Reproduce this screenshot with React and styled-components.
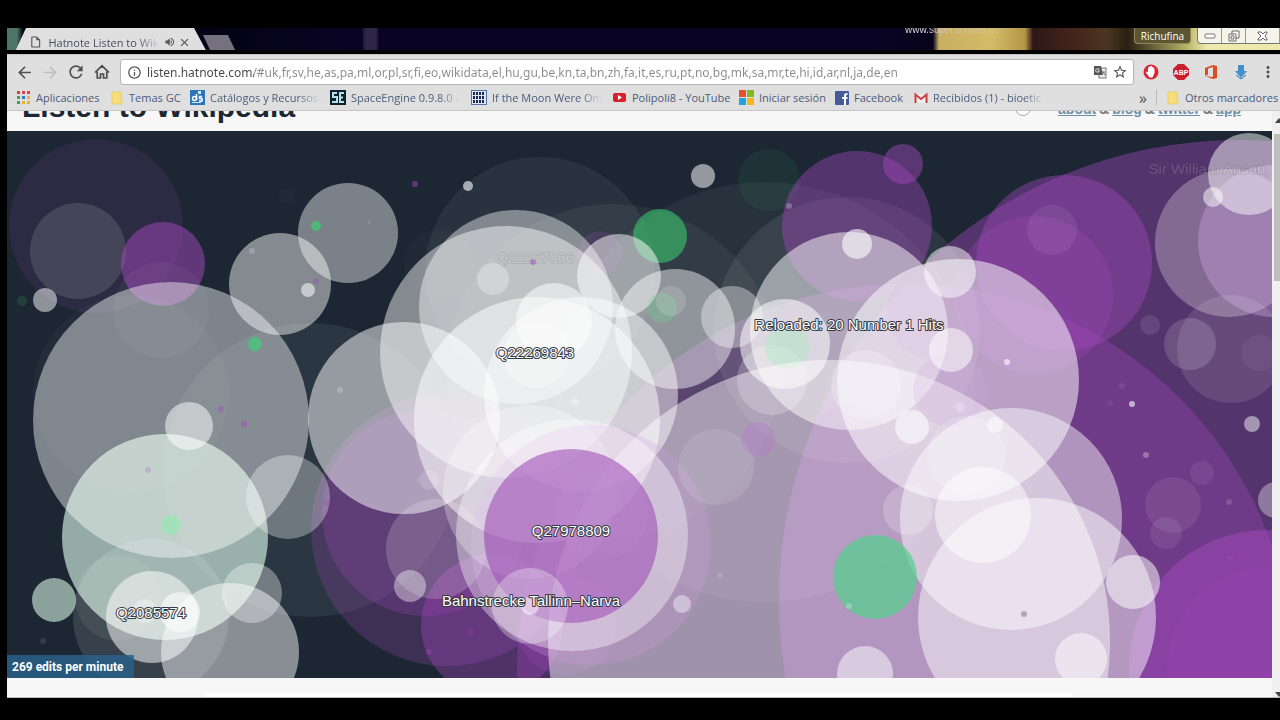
import React from "react";
import styled, { createGlobalStyle } from "styled-components";
import {
  MdArrowBack, MdArrowForward, MdRefresh, MdInfoOutline, MdStarBorder,
  MdVolumeUp, MdClose, MdMoreVert, MdOutlineInsertDriveFile,
} from "react-icons/md";

const GlobalStyle = createGlobalStyle`
  * { box-sizing: border-box; }
  body { margin: 0; background: #000; }
  button, input { font: inherit; }
`;

const ui = `"Open Sans", "Noto Sans", sans-serif`;
const sans = `"Liberation Sans", Arial, sans-serif`;

const Screen = styled.div`
  min-height: 100vh;
  display: flex;
  flex-direction: column;
  padding: 28px 0 22px 7px;
  background: #000;
  font-family: ${ui};
`;

const TabStrip = styled.div`
  height: 26px;
  display: flex;
  align-items: flex-start;
  overflow: hidden;
  border-bottom: 4px solid #000;
  background: linear-gradient(90deg, #4c7568 10px, #02020c 16px, #040216 220px, #090424 340px, #090424 355px, #2c2546 358px, #2c2546 369px, #090424 372px, #090424 860px, #07031c 926px, #c9ae63 932px, #d4bb66 985px, #b39645 1018px, #2b1716 1026px, #45231b 1065px, #4b3520 1100px, #291f12 1120px, #b9b46a 1180px, #eee9ac 1200px);
`;

const Tab = styled.div`
  display: flex;
  align-items: center;
  width: 194px;
  height: 26px;
  margin-left: 7px;
  padding: 2px 16px 0 15px;
  background: #dfdfdf;
  clip-path: polygon(12px 0, 180px 0, 194px 100%, 0 100%);
  color: #555;
  font-size: 11px;
  flex-shrink: 0;
`;

const TabTitle = styled.span`
  flex: 1;
  margin: 0 6px;
  white-space: nowrap;
  color: #4a4a5e;
  mask-image: linear-gradient(90deg, #000 88px, transparent 112px);
`;

const PlainButton = styled.button`
  display: flex;
  align-items: center;
  justify-content: center;
  width: ${(p) => p.$w || 16}px;
  height: ${(p) => p.$h || 16}px;
  padding: 0;
  border: 0;
  background: none;
  color: ${(p) => p.$color || "#505050"};
  flex-shrink: 0;
`;

const NewTab = styled.button`
  width: 32px;
  height: 15px;
  margin: 7px 0 0 -5px;
  padding: 0;
  border: 0;
  background: #75717e;
  clip-path: polygon(0 0, 25px 0, 100% 100%, 7px 100%);
`;

const Watermark = styled.span`
  margin: -5px 0 0 auto;
  width: 95px;
  color: #d8d3cf;
  font: 10px/14px ${sans};
  white-space: nowrap;
  mask-image: linear-gradient(90deg, #000 24px, rgba(0, 0, 0, 0.45) 50px);
`;

const Profile = styled.button`
  height: 16px;
  width: 57px;
  margin: 0 6px 0 134px;
  padding: 0;
  border: 1px solid #8e8860;
  border-top: 0;
  border-radius: 0 0 4px 4px;
  background: #5c552f;
  color: #fff;
  font: 10px/14px ${ui};
`;

const WindowButtons = styled.div`
  display: flex;
  height: 16px;
  border-left: 1px solid #777;
  border-bottom: 1px solid #777;
  border-radius: 0 0 0 4px;
  background: #f4f4ea;
`;

const WindowButton = styled(PlainButton)`
  height: 15px;
  border-right: 1px solid #999;
`;

const Toolbar = styled.div`
  display: flex;
  align-items: center;
  height: 33px;
  padding: 2px 0 0 4px;
  border-top: 1px solid #c4c4c4;
  background: #dfdfdf;
`;

const NavButtons = styled.div`
  display: flex;
  margin-right: 5px;
`;

const AddressBar = styled.form`
  flex: 1;
  min-width: 0;
  height: 26px;
  display: flex;
  align-items: center;
  padding: 0 5px 0 6px;
  border: 1px solid #b5b5b5;
  border-radius: 3px;
  background: #fff;
`;

const Address = styled.input`
  flex: 1;
  min-width: 0;
  height: 22px;
  margin-left: 5px;
  padding: 0;
  border: 0;
  outline: 0;
  font-family: "Noto Sans", sans-serif;
  font-size: 12px;
  background: linear-gradient(90deg, #45454c 107px, #8b8b8b 107px);
  background-clip: text;
  -webkit-background-clip: text;
  -webkit-text-fill-color: transparent;
`;

const Extensions = styled.div`
  display: flex;
  align-items: center;
  margin-left: 2px;
`;

const Bookmarks = styled.nav`
  display: flex;
  align-items: center;
  height: 24px;
  padding: 0 5px 2px 9px;
  background: #dfdfdf;
  border-bottom: 1px solid #c6c6c6;
`;

const BookmarkLink = styled.a`
  display: flex;
  align-items: center;
  gap: 5px;
  margin-right: 10px;
  flex-shrink: 0;
  color: #4b5c7c;
  font-size: 11px;
  line-height: 16px;
  text-decoration: none;
  white-space: nowrap;
  &:last-child { margin-right: 0; }
  span {
    width: ${(p) => p.$w}px;
    mask-image: ${(p) => (p.$fade ? "linear-gradient(90deg, #000 80%, transparent)" : "none")};
  }
`;

const More = styled(PlainButton)`
  margin-left: auto;
  font-size: 16px;
  line-height: 16px;
`;

const Divider = styled.span`
  width: 1px;
  height: 15px;
  margin: 0 9px 0 5px;
  background: #bbb;
`;

const Viewport = styled.div`
  flex: 1;
  display: flex;
  background: #f7f7f7;
  border-bottom: 1px solid #bcbcbc;
  font-family: ${sans};
`;

const Page = styled.main`
  flex: 1;
  min-width: 0;
  display: flex;
  flex-direction: column;
`;

const Header = styled.header`
  height: 20px;
  display: flex;
  align-items: flex-end;
  justify-content: space-between;
  padding: 0 31px 7px 15px;
  overflow: hidden;
`;

const Title = styled.h1`
  margin: 0;
  color: #1c2733;
  font-size: 30px;
  line-height: 34px;
`;

const Links = styled.div`
  display: flex;
  align-items: flex-end;
  padding-bottom: 6px;
  color: #777;
  font-size: 14px;
  font-weight: bold;
  line-height: 18px;
  gap: 3px;
  a { color: #6d8ea5; }
`;

const Radio = styled.input`
  width: 16px;
  height: 16px;
  margin: 0 24px 2px 0;
  appearance: none;
  border: 1px solid #aaa;
  border-radius: 50%;
  background: #fff;
`;

const Stage = styled.div`
  flex: 1;
  display: grid;
  background: #1c2733;
  overflow: hidden;
  > * { grid-area: 1 / 1; }
`;

const Bubbles = styled.svg`
  width: 100%;
  height: 547px;
  display: block;
`;

const BubbleLabel = styled.text`
  font: 15px ${sans};
  text-anchor: middle;
  fill: #fff;
  stroke: #343943;
  stroke-width: 2px;
  stroke-linejoin: round;
  paint-order: stroke;
  opacity: ${(p) => p.$fade || 1};
`;

const EditRate = styled.p`
  align-self: end;
  justify-self: start;
  z-index: 1;
  width: 127px;
  height: 23px;
  margin: 0;
  padding: 0 5px;
  background: rgba(41, 98, 137, 0.85);
  color: #fff;
  font-family: Roboto, ${sans};
  font-size: 12px;
  font-weight: bold;
  line-height: 25px;
  white-space: nowrap;
`;

const PageFoot = styled.footer`
  height: 19px;
  padding: 15px 200px 0 199px;
  &::after { content: ""; display: block; height: 4px; background: #fff; }
`;

const ScrollTrack = styled.div`
  width: 8px;
  display: flex;
  flex-direction: column;
  justify-content: space-between;
  padding-top: 7px;
  background: #f0f0f0;
`;

const ScrollThumb = styled.div`
  height: 147px;
  margin: 10px 0 auto 2px;
  background: #bcbfbd;
`;

const W = "#ffffff";
const P = "#a347bd";
const G = "#3fcf75";
const M = "#d5f5e3";

// centre x, centre y, radius, fill, opacity; painted from the oldest edit to the newest
const bubbles = [
  [1239, 600, 460, P, 0.42],
  [905, 672, 388, P, 0.34],
  [310, 470, 147, M, 0.08],
  [540, 272, 115, W, 0.06],
  [613, 371, 167, M, 0.06],
  [765, 392, 210, W, 0.05],
  [847, 330, 133, W, 0.08],
  [96, 226, 87, P, 0.12],
  [78, 251, 48, W, 0.12],
  [163, 264, 42, P, 0.5],
  [161, 310, 48, W, 0.04],
  [131, 393, 98, W, 0.03],
  [769, 180, 31, G, 0.07],
  [440, 265, 36, W, 0.02],
  [287, 196, 8, W, 0.02],
  [447, 530, 136, P, 0.25],
  [425, 513, 103, P, 0.25],
  [492, 625, 71, P, 0.38],
  [566, 625, 50, P, 0.2],
  [165, 537, 103, M, 0.65],
  [151, 617, 78, W, 0.12],
  [118, 598, 43, W, 0.07],
  [857, 226, 75, P, 0.42],
  [903, 164, 20, P, 0.46],
  [1034, 295, 79, P, 0.25],
  [1064, 263, 88, P, 0.42],
  [1052, 230, 25, W, 0.07],
  [1266, 667, 137, P, 0.5],
  [1268, 668, 101, P, 0.25],
  [171, 420, 138, W, 0.43],
  [280, 284, 51, W, 0.46],
  [348, 233, 50, W, 0.42],
  [252, 251, 3, W, 0.2],
  [369, 222, 2, W, 0.1],
  [316, 226, 5, G, 0.7],
  [308, 290, 7, W, 0.55],
  [316, 281, 3, P, 0.35],
  [255, 344, 7, G, 0.7],
  [45, 300, 12, W, 0.5],
  [22, 301, 5, G, 0.15],
  [189, 426, 24, W, 0.5],
  [221, 409, 3, P, 0.4],
  [244, 424, 3, P, 0.5],
  [148, 470, 3, P, 0.2],
  [171, 525, 10, "#7ff0a5", 0.5],
  [152, 617, 46, W, 0.52],
  [180, 612, 20, W, 0.55],
  [145, 611, 12, W, 0.3],
  [230, 652, 69, W, 0.48],
  [252, 593, 30, W, 0.35],
  [54, 600, 22, M, 0.6],
  [43, 641, 3, W, 0.1],
  [288, 497, 42, W, 0.32],
  [404, 418, 96, W, 0.5],
  [340, 390, 3, W, 0.2],
  [436, 549, 50, W, 0.18],
  [410, 586, 16, W, 0.4],
  [429, 480, 10, W, 0.15],
  [415, 184, 3, P, 0.5],
  [468, 186, 5, W, 0.6],
  [703, 176, 12, W, 0.53],
  [600, 253, 22, P, 0.2],
  [516, 307, 97, W, 0.42],
  [506, 352, 126, W, 0.46],
  [493, 279, 16, W, 0.3],
  [533, 262, 3, P, 0.5],
  [537, 420, 123, W, 0.5],
  [581, 394, 97, W, 0.48],
  [554, 321, 38, W, 0.52],
  [536, 355, 33, W, 0.3],
  [575, 402, 4, W, 0.3],
  [660, 236, 27, "#38c46c", 0.62],
  [619, 276, 42, W, 0.5],
  [675, 329, 60, W, 0.46],
  [662, 308, 15, "#6bdc93", 0.28],
  [671, 301, 15, W, 0.14],
  [732, 317, 31, W, 0.36],
  [772, 380, 35, W, 0.22],
  [849, 331, 99, W, 0.5],
  [857, 244, 15, W, 0.6],
  [785, 344, 45, W, 0.55],
  [787, 347, 22, "#9eefbd", 0.36],
  [789, 206, 3, W, 0.25],
  [848, 445, 40, P, 0.08],
  [829, 641, 281, W, 0.47],
  [950, 390, 37, P, 0.2],
  [935, 312, 48, P, 0.12],
  [958, 380, 121, W, 0.52],
  [866, 385, 35, W, 0.22],
  [950, 272, 26, W, 0.5],
  [951, 350, 22, W, 0.52],
  [1007, 362, 3, W, 0.6],
  [530, 492, 87, W, 0.28],
  [591, 545, 120, "#d39ae5", 0.25],
  [572, 535, 116, W, 0.38],
  [602, 513, 46, W, 0.12],
  [571, 536, 87, "#a050b8", 0.6],
  [530, 606, 38, W, 0.3],
  [530, 606, 9, W, 0.5],
  [682, 604, 9, W, 0.4],
  [716, 467, 38, W, 0.11],
  [758, 439, 17, "#b872cf", 0.3],
  [720, 575, 3, W, 0.12],
  [429, 652, 3, P, 0.4],
  [471, 632, 3, P, 0.25],
  [326, 503, 3, P, 0.25],
  [966, 455, 39, W, 0.18],
  [908, 510, 25, W, 0.2],
  [1011, 519, 111, W, 0.46],
  [983, 515, 48, W, 0.5],
  [1037, 617, 119, W, 0.48],
  [912, 427, 17, W, 0.55],
  [995, 425, 8, W, 0.5],
  [960, 407, 5, W, 0.25],
  [875, 577, 42, "#55d08c", 0.72],
  [849, 606, 3, W, 0.25],
  [1024, 614, 3, "#65566e", 0.4],
  [1133, 582, 27, W, 0.52],
  [1081, 659, 26, W, 0.5],
  [865, 674, 28, W, 0.5],
  [1229, 243, 74, W, 0.27],
  [1274, 241, 76, "#d0a5e3", 0.38],
  [1249, 174, 41, W, 0.48],
  [1213, 197, 10, W, 0.5],
  [1231, 349, 54, W, 0.11],
  [1190, 344, 26, W, 0.15],
  [1150, 325, 10, W, 0.1],
  [1259, 353, 18, W, 0.04],
  [1252, 424, 8, W, 0.48],
  [1276, 500, 18, W, 0.35],
  [1173, 505, 28, W, 0.08],
  [1166, 533, 16, W, 0.08],
  [1202, 473, 12, W, 0.07],
  [1146, 455, 3, W, 0.3],
  [1229, 502, 3, W, 0.15],
  [1132, 404, 3, W, 0.6],
  [1122, 386, 3, W, 0.08],
  [1110, 403, 3, W, 0.06],
  [1230, 558, 3, P, 0.4],
];

const labels = [
  ["Q22269843", 535, 358],
  ["Q27978809", 571, 536],
  ["Bahnstrecke Tallinn–Narva", 531, 606],
  ["Q2085574", 151, 618],
  ["Reloaded: 20 Number 1 Hits", 849, 330],
  ["Q22267066", 535, 263, 0.12],
  ["Sir William Anson,", 1209, 174, 0.14],
];

const HomeIcon = () => (
  <svg width="16" height="16" viewBox="0 0 16 16" fill="none" stroke="#505050" strokeWidth="1.7">
    <path d="M1 8.5 8 1.8l7 6.7M3.2 7.5V14h3.3v-4h3v4h3.3V7.5" />
  </svg>
);

const AppsIcon = () => (
  <svg width="15" height="15" viewBox="0 0 15 15">
    {["#d9434b", "#d9434b", "#d9434b", "#3f9f60", "#3f78c5", "#e8b52f", "#3f9f60", "#e8b52f", "#e8b52f"].map((c, i) => (
      <rect key={i} x={1 + (i % 3) * 5} y={1 + Math.floor(i / 3) * 5} width="3" height="3" fill={c} />
    ))}
  </svg>
);

const FolderIcon = () => (
  <svg width="14" height="14" viewBox="0 0 14 14">
    <path d="M2 1h9v8h1v4H2z" fill="#f8df7c" stroke="#e3c65c" strokeWidth=".7" />
  </svg>
);

const CatalogIcon = () => (
  <svg width="15" height="15" viewBox="0 0 15 15">
    <rect width="15" height="15" fill="#2b75b8" />
    <path d="M6.500 4v6M12 6.500H9.500v2H12V11H9" fill="none" stroke="#fff" strokeWidth="1.500" />
    <circle cx="4.500" cy="8.500" r="2" fill="none" stroke="#fff" strokeWidth="1.500" />
    <path d="M8 1h3v3H8zM2 12h9v1H2z" fill="#d6eaff" />
  </svg>
);

const SpaceIcon = () => (
  <svg width="16" height="15" viewBox="0 0 16 15">
    <rect width="16" height="15" fill="#0c222d" />
    <path d="M7 3H3v4h4v5H2M14 3h-4v9h4M10 7.500h3" fill="none" stroke="#b8e0e8" strokeWidth="2" />
  </svg>
);

const MoonIcon = () => (
  <svg width="16" height="15" viewBox="0 0 16 15">
    <rect x=".5" y=".5" width="15" height="14" fill="#dfe6f6" stroke="#5570a8" />
    {[0, 1, 2].flatMap((r) => [0, 1, 2, 3].map((c) => (
      <rect key={`${r}${c}`} x={2 + c * 3} y={2 + r * 4} width="2" height="3" fill="#1b2850" />
    )))}
  </svg>
);

const YouTubeIcon = () => (
  <svg width="15" height="15" viewBox="0 0 15 15">
    <rect x="1" y="3" width="13" height="9" rx="2" fill="#d9202a" />
    <path d="m6 5 4 2.500-4 2.500z" fill="#fff" />
  </svg>
);

const MicrosoftIcon = () => (
  <svg width="15" height="15" viewBox="0 0 15 15">
    <path d="M0 0h7v7H0z" fill="#e84d2d" /><path d="M8 0h7v7H8z" fill="#7fba20" />
    <path d="M0 8h7v7H0z" fill="#20a4e0" /><path d="M8 8h7v7H8z" fill="#f6b51c" />
  </svg>
);

const FacebookIcon = () => (
  <svg width="14" height="14" viewBox="0 0 14 14">
    <rect width="14" height="14" rx="1" fill="#435b99" />
    <path d="M9 14V8H7V6h2V4.500C9 2.800 10 2 12.500 2v2C11.300 4 11 4 11 5v1h1.500v2H11v6z" fill="#fff" />
  </svg>
);

const GmailIcon = () => (
  <svg width="14" height="14" viewBox="0 0 14 14">
    <path d="M1 3h12v9H1z" fill="#eee" />
    <path d="M1.500 12V3.500L7 8l5.500-4.500V12" fill="none" stroke="#ca3e43" strokeWidth="2" />
  </svg>
);

const TranslateIcon = () => (
  <svg width="14" height="14" viewBox="0 0 14 14">
    <rect x="6" y="3" width="7" height="10" fill="#eee" stroke="#777" />
    <path d="M1 1h7l2 9H1z" fill="#555" />
    <path d="M6.500 4H4a1.500 1.500 0 1 0 0 3h2V5.500H5" fill="none" stroke="#ddd" />
    <path d="M9 7h3M10 7l2 3" fill="none" stroke="#666" />
  </svg>
);

const HandIcon = () => (
  <svg width="16" height="16" viewBox="0 0 16 16">
    <circle cx="8" cy="8" r="7.500" fill="#dc2635" />
    <path d="M5 3.500h1V2.500h1.500V2H9v1h1.500v1.500h1V9l-2 4.500h-3L3.500 9.500 3 8l1-.5 1 1z" fill="#fff" />
  </svg>
);

const AdblockIcon = () => (
  <svg width="16" height="16" viewBox="0 0 16 16">
    <path d="M5 0h6l5 5v6l-5 5H5l-5-5V5z" fill="#c91e2b" />
    <text x="8" y="11" textAnchor="middle" fontFamily="Liberation Sans" fontWeight="bold" fontSize="7" fill="#fff">ABP</text>
  </svg>
);

const OfficeIcon = () => (
  <svg width="14" height="16" viewBox="0 0 14 16">
    <path d="m1 4 8-3 4 1v12l-4 1-8-3 8 1V3L4 4.500v6L1 12z" fill="#dd4b25" />
  </svg>
);

const DownloadIcon = () => (
  <svg width="14" height="16" viewBox="0 0 14 16">
    <path d="M4 1h6v6h3l-6 7-6-7h3z" fill="#4390cf" />
    <path d="m2 11 5 4 5-4" fill="none" stroke="#2f71b2" />
  </svg>
);

const bookmarks = [
  ["Aplicaciones", 64, AppsIcon],
  ["Temas GC", 51, FolderIcon],
  ["Catálogos y Recursos", 110, CatalogIcon, true],
  ["SpaceEngine 0.9.8.0 -", 110, SpaceIcon, true],
  ["If the Moon Were Onl", 110, MoonIcon, true],
  ["Polipoli8 - YouTube", 97, YouTubeIcon],
  ["Iniciar sesión", 66, MicrosoftIcon],
  ["Facebook", 50, FacebookIcon],
  ["Recibidos (1) - bioetic", 112, GmailIcon, true],
];

export default function App() {
  return (
    <Screen>
      <GlobalStyle />
      <TabStrip>
        <Tab>
          <MdOutlineInsertDriveFile size={14} />
          <TabTitle>Hatnote Listen to Wik</TabTitle>
          <MdVolumeUp size={12} />
          <PlainButton aria-label="Close tab"><MdClose size={13} /></PlainButton>
        </Tab>
        <NewTab aria-label="New tab" />
        <Watermark>www.superanimes.com</Watermark>
        <Profile>Richufina</Profile>
        <WindowButtons>
          <WindowButton $w={24} aria-label="Minimize">
            <svg width="12" height="6"><rect x="1" y="1" width="10" height="4" rx="1" fill="#fff" stroke="#777" /></svg>
          </WindowButton>
          <WindowButton $w={24} aria-label="Restore">
            <svg width="12" height="12" fill="#fff" stroke="#666"><path d="M4 1h7v7H4z" /><path d="M1 4h7v7H1z" /><path d="M3 6h3v3H3z" /></svg>
          </WindowButton>
          <WindowButton $w={34} aria-label="Close">
            <svg width="11" height="10" fill="#fff" stroke="#666"><path d="M1 1h3l2 2 2-2h2v1L8 5l2 3v1H8L6 7 4 9H1V8l3-3-3-3z" /></svg>
          </WindowButton>
        </WindowButtons>
      </TabStrip>

      <Toolbar>
        <NavButtons>
          <PlainButton $w={26} $h={24} aria-label="Back"><MdArrowBack size={19} /></PlainButton>
          <PlainButton $w={26} $h={24} $color="#bdbdbd" aria-label="Forward"><MdArrowForward size={19} /></PlainButton>
          <PlainButton $w={26} $h={24} aria-label="Reload"><MdRefresh size={20} /></PlainButton>
          <PlainButton $w={26} $h={24} aria-label="Home"><HomeIcon /></PlainButton>
        </NavButtons>
        <AddressBar>
          <MdInfoOutline size={15} color="#505050" />
          <Address
            aria-label="Address"
            defaultValue="listen.hatnote.com/#uk,fr,sv,he,as,pa,ml,or,pl,sr,fi,eo,wikidata,el,hu,gu,be,kn,ta,bn,zh,fa,it,es,ru,pt,no,bg,mk,sa,mr,te,hi,id,ar,nl,ja,de,en"
          />
          <PlainButton type="button" $w={24} aria-label="Translate"><TranslateIcon /></PlainButton>
          <PlainButton type="button" $w={16} aria-label="Bookmark"><MdStarBorder size={16} /></PlainButton>
        </AddressBar>
        <Extensions>
          <PlainButton $w={30} aria-label="Blocker"><HandIcon /></PlainButton>
          <PlainButton $w={30} aria-label="Adblock Plus"><AdblockIcon /></PlainButton>
          <PlainButton $w={30} aria-label="Office"><OfficeIcon /></PlainButton>
          <PlainButton $w={30} aria-label="Downloads"><DownloadIcon /></PlainButton>
          <PlainButton $w={24} aria-label="Menu"><MdMoreVert size={18} /></PlainButton>
        </Extensions>
      </Toolbar>

      <Bookmarks>
        {bookmarks.map(([text, w, Icon, fade]) => (
          <BookmarkLink key={text} href="#" $w={w} $fade={fade}>
            <Icon />
            <span>{text}</span>
          </BookmarkLink>
        ))}
        <More aria-label="More bookmarks">»</More>
        <Divider />
        <BookmarkLink href="#" $w={90}>
          <FolderIcon />
          <span>Otros marcadores</span>
        </BookmarkLink>
      </Bookmarks>

      <Viewport>
        <Page>
          <Header>
            <Title>Listen to Wikipedia</Title>
            <Links>
              <Radio type="radio" aria-label="Sound" />
              <a href="#">about</a> &amp; <a href="#">blog</a> &amp; <a href="#">twitter</a> &amp; <a href="#">app</a>
            </Links>
          </Header>
          <Stage>
            <Bubbles viewBox="7 131 1265 547" preserveAspectRatio="xMinYMin slice">
              {bubbles.map(([cx, cy, r, fill, o], i) => (
                <circle key={i} cx={cx} cy={cy} r={r} fill={fill} fillOpacity={o} />
              ))}
              {labels.map(([text, x, y, fade]) => (
                <BubbleLabel key={text} x={x} y={y} $fade={fade}>{text}</BubbleLabel>
              ))}
            </Bubbles>
            <EditRate>269 edits per minute</EditRate>
          </Stage>
          <PageFoot />
        </Page>
        <ScrollTrack>
          <svg width="8" height="6"><path d="M3 5 7 0l4 5z" fill="#444" /></svg>
          <ScrollThumb />
          <svg width="8" height="6"><path d="M3 1h8L7 6z" fill="#444" /></svg>
        </ScrollTrack>
      </Viewport>
    </Screen>
  );
}
